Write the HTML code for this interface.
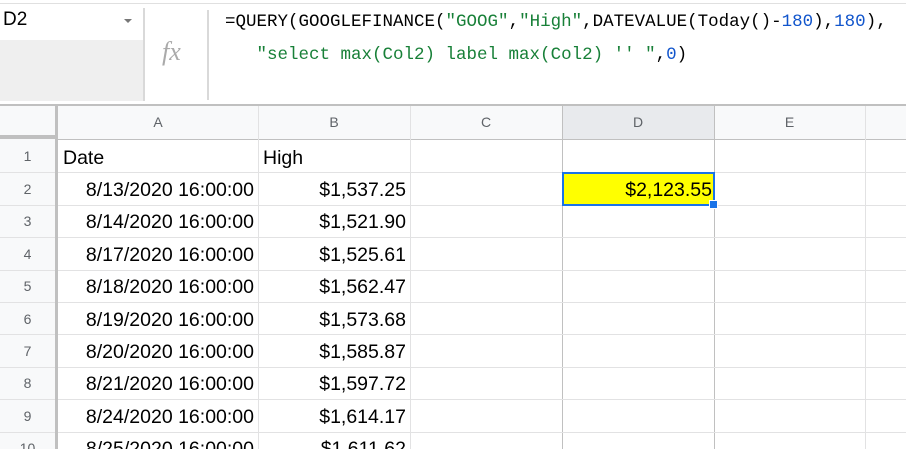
<!DOCTYPE html>
<html style="width:906px;height:449px;overflow:hidden"><head><style>
*{margin:0;padding:0;box-sizing:border-box}
body{width:906px;height:449px;overflow:hidden;background:#fff;font-family:"Liberation Sans",Arial,sans-serif;position:relative}
.a{position:absolute}
.cell{position:absolute;font-size:19.5px;color:#000;white-space:nowrap;line-height:32px}
.rn{position:absolute;left:0;width:55px;text-align:center;font-size:14px;color:#5f6368;line-height:32px}
.ch{position:absolute;top:106px;height:33px;line-height:33px;text-align:center;font-size:14px;color:#5f6368}
.mono{font-family:"Liberation Mono","DejaVu Sans Mono",monospace;font-size:17.5px;white-space:pre;color:#000}
.g{color:#188038}.b{color:#1155cc}
</style></head><body>
<div class="a" style="left:0;top:3px;width:906px;height:1px;background:#e0e0e0"></div>
<div class="a" style="left:0;top:40px;width:143px;height:61px;background:#efefef"></div>
<div class="a" style="left:3px;top:9px;font-size:19px;color:#000">D2</div>
<div class="a" style="left:124px;top:19px;width:0;height:0;border-left:4px solid transparent;border-right:4px solid transparent;border-top:4px solid #777"></div>
<div class="a" style="left:143px;top:8px;width:2px;height:93px;background:#d9d9d9"></div>
<div class="a" style="left:162px;top:37px;font-family:'Liberation Serif',serif;font-style:italic;font-size:26px;color:#aaa">fx</div>
<div class="a" style="left:207px;top:10px;width:2px;height:90px;background:#d9d9d9"></div>
<div class="a mono" style="left:225px;top:12px">=QUERY(GOOGLEFINANCE(<span class="g">"GOOG"</span>,<span class="g">"High"</span>,DATEVALUE(Today()-<span class="b">180</span>),<span class="b">180</span>),</div>
<div class="a mono" style="left:225px;top:45px">   <span class="g">"select max(Col2) label max(Col2) '' "</span>,<span class="b">0</span>)</div>
<div class="a" style="left:0;top:104px;width:906px;height:36px;background:#f8f9fa;border-top:2px solid #c0c0c0;border-bottom:1px solid #c0c0c0"></div>
<div class="a" style="left:562px;top:106px;width:152px;height:33px;background:#e8eaed"></div>
<div class="a" style="left:0;top:106px;width:58px;height:343px;background:#f8f9fa"></div>
<div class="a" style="left:0;top:135px;width:58px;height:4px;background:#c0c0c0"></div>
<div class="ch" style="left:58px;width:200px">A</div>
<div class="ch" style="left:258px;width:152px">B</div>
<div class="ch" style="left:410px;width:152px">C</div>
<div class="ch" style="left:562px;width:152px">D</div>
<div class="ch" style="left:714px;width:151px">E</div>
<div class="a" style="left:258px;top:106px;width:1px;height:343px;background:#e2e2e3"></div>
<div class="a" style="left:410px;top:106px;width:1px;height:343px;background:#e2e2e3"></div>
<div class="a" style="left:562px;top:106px;width:1px;height:343px;background:#c0c0c0"></div>
<div class="a" style="left:714px;top:106px;width:1px;height:343px;background:#c0c0c0"></div>
<div class="a" style="left:865px;top:106px;width:1px;height:343px;background:#e2e2e3"></div>
<div class="a" style="left:0;top:172px;width:906px;height:1px;background:#e2e2e3"></div>
<div class="a" style="left:0;top:205px;width:906px;height:1px;background:#e2e2e3"></div>
<div class="a" style="left:0;top:237px;width:906px;height:1px;background:#e2e2e3"></div>
<div class="a" style="left:0;top:270px;width:906px;height:1px;background:#e2e2e3"></div>
<div class="a" style="left:0;top:302px;width:906px;height:1px;background:#e2e2e3"></div>
<div class="a" style="left:0;top:334px;width:906px;height:1px;background:#e2e2e3"></div>
<div class="a" style="left:0;top:367px;width:906px;height:1px;background:#e2e2e3"></div>
<div class="a" style="left:0;top:399px;width:906px;height:1px;background:#e2e2e3"></div>
<div class="a" style="left:0;top:432px;width:906px;height:1px;background:#e2e2e3"></div>
<div class="a" style="left:55px;top:106px;width:3px;height:343px;background:#c0c0c0"></div>

<div class="rn" style="top:140px">1</div><div class="rn" style="top:173px">2</div><div class="rn" style="top:205px">3</div><div class="rn" style="top:238px">4</div><div class="rn" style="top:270px">5</div><div class="rn" style="top:303px">6</div><div class="rn" style="top:335px">7</div><div class="rn" style="top:367px">8</div><div class="rn" style="top:400px">9</div><div class="rn" style="top:432px">10</div>

<div class="cell" style="left:63px;top:142px">Date</div>
<div class="cell" style="left:263px;top:142px">High</div>

<div class="cell" style="right:652px;top:174px">8/13/2020 16:00:00</div><div class="cell" style="right:500px;top:174px">$1,537.25</div>
<div class="cell" style="right:652px;top:206px">8/14/2020 16:00:00</div><div class="cell" style="right:500px;top:206px">$1,521.90</div>
<div class="cell" style="right:652px;top:239px">8/17/2020 16:00:00</div><div class="cell" style="right:500px;top:239px">$1,525.61</div>
<div class="cell" style="right:652px;top:271px">8/18/2020 16:00:00</div><div class="cell" style="right:500px;top:271px">$1,562.47</div>
<div class="cell" style="right:652px;top:304px">8/19/2020 16:00:00</div><div class="cell" style="right:500px;top:304px">$1,573.68</div>
<div class="cell" style="right:652px;top:336px">8/20/2020 16:00:00</div><div class="cell" style="right:500px;top:336px">$1,585.87</div>
<div class="cell" style="right:652px;top:368px">8/21/2020 16:00:00</div><div class="cell" style="right:500px;top:368px">$1,597.72</div>
<div class="cell" style="right:652px;top:401px">8/24/2020 16:00:00</div><div class="cell" style="right:500px;top:401px">$1,614.17</div>
<div class="cell" style="right:652px;top:433px">8/25/2020 16:00:00</div><div class="cell" style="right:500px;top:433px">$1,611.62</div>

<div class="a" style="left:562px;top:172px;width:153px;height:34px;background:#ffff00;border:2px solid #1a73e8"></div>
<div class="cell" style="right:194px;top:174px">$2,123.55</div>
<div class="a" style="left:709px;top:200px;width:9px;height:9px;background:#1a73e8;border:1px solid #fff"></div>
</body></html>
